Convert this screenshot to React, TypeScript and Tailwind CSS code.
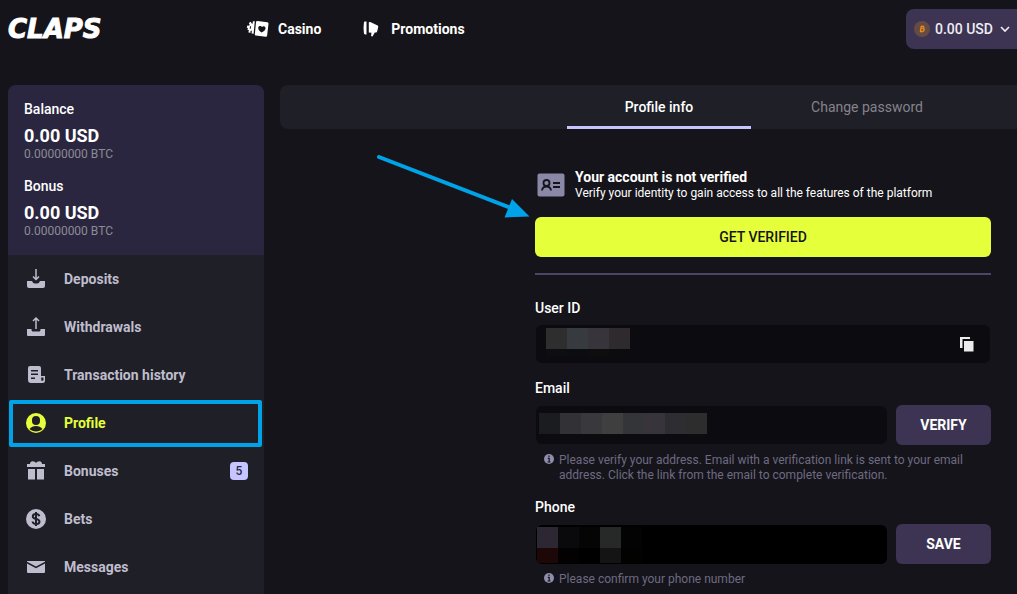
import type { ReactNode } from 'react';

type MenuItem = {
  label: string;
  icon: ReactNode;
  active?: boolean;
  badge?: number;
};

const menuItems: MenuItem[] = [
  { label: 'Deposits', icon: <DepositIcon /> },
  { label: 'Withdrawals', icon: <WithdrawIcon /> },
  { label: 'Transaction history', icon: <HistoryIcon /> },
  { label: 'Profile', icon: <ProfileIcon />, active: true },
  { label: 'Bonuses', icon: <GiftIcon />, badge: 5 },
  { label: 'Bets', icon: <BetsIcon /> },
  { label: 'Messages', icon: <MailIcon /> },
];

const userIdBlocks = [
  ['#2e2e2f', '#373a3e', '#37353b', '#2e2a2d'],
  ['#0c0e12', '#0b0d10', '#0e0e0f', '#0c0b0e'],
];
const emailBlocks = [
  ['#1a1c20', '#323136', '#39383c', '#3f3f40', '#333538', '#37353b', '#2e2d32', '#2d2d2e'],
];
const phoneBlocks = [
  ['#2d2733', '#0a0a0c', '#050505', '#272928', '#030303'],
  ['#1e0707', '#030101', '#000000', '#141414', '#020200'],
];

function DepositIcon() {
  return (
    <svg viewBox="0 0 24 24" className="size-6" fill="currentColor">
      <path d="M3 14h4.5c.5 0 .8.3 1 .8.4 1.1 1.200 1.700 2.300 1.700h2.400c1.100 0 1.900-.6 2.300-1.700.2-.5.5-.8 1-.8H21v5a2 2 0 0 1-2 2H5a2 2 0 0 1-2-2z" />
      <path d="M12 2v10M9 9.500l3 3 3-3" fill="none" stroke="currentColor" strokeWidth="1.500" />
    </svg>
  );
}

function WithdrawIcon() {
  return (
    <svg viewBox="0 0 24 24" className="size-6" fill="currentColor">
      <path d="M3 14h4.500v1c0 .9.600 1.500 1.500 1.500h6c.9 0 1.500-.6 1.500-1.500v-1H21v6a1 1 0 0 1-1 1H4a1 1 0 0 1-1-1z" />
      <path d="M12 14V3.500M9 6l3-3 3 3" fill="none" stroke="currentColor" strokeWidth="1.500" />
    </svg>
  );
}

function HistoryIcon() {
  return (
    <svg viewBox="0 0 24 24" className="size-6">
      <path
        fill="currentColor"
        fillRule="evenodd"
        d="M6 3h9a2 2 0 0 1 2 2v8h4v4.500a2.500 2.500 0 0 1-2.500 2.500H7A3 3 0 0 1 4 17V5a2 2 0 0 1 2-2zM17.200 14.500V17a1.200 1.200 0 0 0 2.300 0v-2.500zM7 7v1.500h7V7zM7 10.500V12h7v-1.500zM7 14.500V16h4v-1.500z"
      />
    </svg>
  );
}

function ProfileIcon() {
  return (
    <svg viewBox="0 0 24 24" className="size-6">
      <path
        fill="currentColor"
        fillRule="evenodd"
        d="M12 2a10 10 0 1 0 0 20 10 10 0 0 0 0-20zM12 5a4 4 0 0 1 4 4v1a4 4 0 0 1-8 0V9a4 4 0 0 1 4-4zM5.500 18c1.600-2 3.800-3 6.500-3s4.900 1 6.500 3c-1.600 1.600-3.800 2.500-6.500 2.500s-4.900-.9-6.500-2.500z"
      />
    </svg>
  );
}

function GiftIcon() {
  return (
    <svg viewBox="0 0 24 24" className="size-6" fill="currentColor">
      <path d="M3 8V5h3c0-1.600 1-2.800 2.700-2.800 1.400 0 2.500.8 3.300 1.800.8-1 1.900-1.800 3.300-1.800C17 2.200 18 3.400 18 5h3v3zM4 10h7v10.500H4zM13 10h7v10.500h-7z" />
    </svg>
  );
}

function BetsIcon() {
  return (
    <svg viewBox="0 0 24 24" className="size-6">
      <circle cx="12" cy="12" r="10" fill="currentColor" />
      <path
        d="M15.300 9.200c-.3-1.500-1.500-2.200-3.300-2.200-1.900 0-3.200.9-3.200 2.400 0 3.400 6.700 1.600 6.700 5.100 0 1.600-1.400 2.500-3.400 2.500-2 0-3.300-.9-3.500-2.500M12 5v14"
        fill="none"
        stroke="#1f1f27"
        strokeWidth="2"
      />
    </svg>
  );
}

function MailIcon() {
  return (
    <svg viewBox="0 0 24 24" className="size-6" fill="currentColor">
      <path d="M3 6h18v.8l-9 4.700-9-4.700zM3 8.500l9 4.800 9-4.800V17a1 1 0 0 1-1 1H4a1 1 0 0 1-1-1z" />
    </svg>
  );
}

function CasinoIcon() {
  return (
    <svg viewBox="0 0 24 18" className="h-[18px] w-6">
      <path
        fill="#fff"
        fillRule="evenodd"
        d="M11.500 1l9.900 1.200a1.300 1.300 0 0 1 1.100 1.500l-1.400 12a1.300 1.300 0 0 1-1.500 1.100L9.800 15.600a1.200 1.200 0 0 1-1-1.300L10 2.200A1.300 1.300 0 0 1 11.500 1zM16 7c-.7-1.700-3.800-1.500-3.800.9 0 1.900 1.600 3.200 3.200 4.700 1.900-1.100 3.900-2.300 4.100-4.200.300-2.300-2.400-2.900-3.500-1.400z"
      />
      <path
        fill="#fff"
        d="M8.800 1.200L7.600 13.800l-2-.4.300-3-1.300.6-.3 2-2-.8.700-1.900L1.400 9.700l.6-1.400-1.300-.8.700-2.100 1.700.4.600-1L2.800 3l2-1.200.9 1.800.9.100.3-2.500z"
      />
      <path d="M4.500 6.200l-.3 2.600" stroke="#15141a" strokeWidth="1" />
    </svg>
  );
}

function PromotionsIcon() {
  return (
    <svg viewBox="0 0 18 18" className="size-[18px]" fill="#fff">
      <path d="M4 1.500h1.500v13H4.300c-.8 0-1.300-.5-1.400-1.200-.5-3.500-.5-7 0-10.500.1-.8.500-1.300 1.100-1.300z" />
      <path d="M7.800 2.300l1.500-.2 6.800 3.200c.9.400 1.300 1.100 1.100 1.900l-1 4.100c-.2.800-.8 1.200-1.500 1.200h-.9l-2 3.400c-.6.900-1.900.5-1.700-.6l.4-2.600-2.700-.2z" />
    </svg>
  );
}

function Mosaic({ rows, className }: { rows: string[][]; className: string }) {
  return (
    <div aria-hidden="true" className={`pointer-events-none absolute overflow-hidden ${className}`}>
      {rows.map((row, r) => (
        <div key={r} className="flex">
          {row.map((color, i) => (
            <span key={i} className="h-[21px] w-[21px]" style={{ backgroundColor: color }} />
          ))}
        </div>
      ))}
    </div>
  );
}

function Hint({ children }: { children: ReactNode }) {
  return (
    <p className="mt-2 flex gap-1 pl-2 text-xs leading-[15px] text-[#6d6a82]">
      <svg viewBox="0 0 12 12" className="size-3 shrink-0">
        <circle cx="6" cy="6" r="5" fill="#8f8dab" />
        <path d="M6 2.500v1.400M4.800 5.400H6.200V9M4.500 9h3" fill="none" stroke="#15141a" strokeWidth="1.200" />
      </svg>
      <span>{children}</span>
    </p>
  );
}

function BalanceRow({ label }: { label: string }) {
  return (
    <div>
      <div className="text-sm leading-4 font-medium">{label}</div>
      <div className="mt-2 text-lg leading-[22px] font-bold">0.00 USD</div>
      <div className="text-xs leading-[14px] text-[#8d8b93]">0.00000000 BTC</div>
    </div>
  );
}

function Header() {
  return (
    <header className="flex h-[85px] items-start pt-[9px]">
      <div className="flex h-10 w-[238px] items-center pl-2">
        <a
          href="#"
          className="font-['DejaVu_Sans'] text-[26px] leading-9 font-bold italic [-webkit-text-stroke:1px_#fff]"
        >
          CLAPS
        </a>
      </div>
      <nav className="flex h-10 items-center gap-10 pl-2 text-sm font-bold">
        <a href="#" className="flex items-center gap-2">
          <CasinoIcon />
          Casino
        </a>
        <a href="#" className="flex items-center gap-3">
          <PromotionsIcon />
          Promotions
        </a>
      </nav>
      <button className="ml-auto flex h-10 items-center gap-1 rounded-l-lg bg-[#3c3452] pr-1.5 pl-2 text-sm font-medium text-[#eeedf2]">
        <svg viewBox="0 0 16 16" className="mr-px size-4">
          <circle cx="8" cy="8" r="8" fill="#664b45" />
          <path
            d="M6.700 5.600h2.200c1.500 0 1.400 2.100 0 2.200H6.500h2.600c1.700 0 1.300 2.500-.4 2.500H5.800M7.200 5.600l-.9 4.700M8 4.600l-.2 1M9.200 4.600l-.2 1M6.900 10.300l-.2 1M8.100 10.300l-.2 1"
            fill="none"
            stroke="#f7931a"
            strokeWidth="1.100"
          />
        </svg>
        0.00 USD
        <svg viewBox="0 0 12 12" className="ml-0.5 size-3" fill="none" stroke="currentColor" strokeWidth="1.600">
          <path d="M2 4l4 4 4-4" />
        </svg>
      </button>
    </header>
  );
}

function Sidebar() {
  return (
    <aside className="w-64 shrink-0 overflow-hidden rounded-t-lg bg-[#1f1f27]">
      <div className="flex min-h-[170px] flex-col gap-[17px] bg-[#2b2640] p-4">
        <BalanceRow label="Balance" />
        <BalanceRow label="Bonus" />
      </div>
      <nav>
        {menuItems.map((item) => (
          <a
            key={item.label}
            href="#"
            className={`relative flex h-12 items-center gap-4 px-4 text-sm font-bold ${
              item.active ? 'text-[#e5ff3a]' : 'text-[#bfbdcd]'
            }`}
          >
            {item.icon}
            {item.label}
            {item.badge && (
              <span className="ml-auto flex size-[18px] items-center justify-center rounded bg-[#c6c5ff] text-xs font-medium text-[#2b2640]">
                {item.badge}
              </span>
            )}
            {item.active && (
              <span className="absolute top-px right-0.5 bottom-0 left-px rounded-xs border-4 border-[#00a2e8]" />
            )}
          </a>
        ))}
      </nav>
    </aside>
  );
}

function ProfileForm() {
  return (
    <form className="mt-10 mr-[26px] ml-auto w-[456px]">
      <div className="flex items-center gap-2.5 pl-0.5">
        <svg viewBox="0 0 28 24" className="h-6 w-7 shrink-0">
          <rect x="0.500" y="0.500" width="27" height="23" rx="2" fill="#8a88a6" />
          <g fill="none" stroke="#15141a" strokeWidth="1.800">
            <circle cx="9.500" cy="10" r="3" />
            <path d="M5 17.500c.3-2.500 1.800-4 4.500-4s4.200 1.500 4.500 4M16 10h7M16 14h7" />
          </g>
        </svg>
        <div>
          <h1 className="text-sm leading-4 font-bold">Your account is not verified</h1>
          <p className="text-xs leading-4">
            Verify your identity to gain access to all the features of the platform
          </p>
        </div>
      </div>

      <div className="relative mt-4">
        <button type="button" className="h-10 w-full rounded-md bg-[#e5ff3a] text-sm font-medium text-[#15141a]">
          GET VERIFIED
        </button>
        <svg viewBox="0 0 160 70" className="absolute -top-16 right-full h-[70px] w-40" fill="#00a2e8">
          <path d="M4 4L136 55" stroke="#00a2e8" strokeWidth="4" strokeLinecap="round" />
          <path d="M154.500 63.500L129.500 64.500 137 46z" />
        </svg>
      </div>

      <hr className="mt-4 h-0.5 border-0 bg-[#4b4568]" />

      <div className="mt-6 flex flex-col gap-[15px]">
        <div>
          <label htmlFor="user-id" className="block text-sm leading-[18px] font-medium">
            User ID
          </label>
          <div className="relative mt-[7px] flex h-10 p-px">
            <input id="user-id" readOnly className="w-full rounded-md bg-[#0c0b10] px-3 text-sm" />
            <Mosaic rows={userIdBlocks} className="top-1 left-[11px] h-7" />
            <button type="button" aria-label="Copy" className="absolute top-3 right-4">
              <svg viewBox="0 0 16 16" className="size-4" fill="#ececec">
                <path d="M1 1h10v2H3.500v9H1zM5 5h9.500v10.500H5z" />
              </svg>
            </button>
          </div>
        </div>

        <div>
          <label htmlFor="email" className="block text-sm leading-[18px] font-medium">
            Email
          </label>
          <div className="mt-2 flex h-10 gap-2">
            <div className="relative flex flex-1 p-px">
              <input id="email" type="email" className="w-full rounded-md bg-[#0c0b10] px-3 text-sm" />
              <Mosaic rows={emailBlocks} className="top-2 left-1" />
            </div>
            <button type="button" className="w-[95px] rounded-md bg-[#3c3452] text-sm font-bold">
              VERIFY
            </button>
          </div>
          <Hint>
            Please verify your address. Email with a verification link is sent to your email
            <br />
            address. Click the link from the email to complete verification.
          </Hint>
        </div>

        <div>
          <label htmlFor="phone" className="block text-sm leading-[18px] font-medium">
            Phone
          </label>
          <div className="mt-2 flex h-10 gap-2">
            <div className="relative flex flex-1 px-px pt-px">
              <input id="phone" type="tel" className="w-full rounded-md bg-black px-3 text-sm" />
              <Mosaic rows={phoneBlocks} className="top-[3px] left-0.5 h-9" />
            </div>
            <button type="button" className="w-[95px] rounded-md bg-[#3c3452] text-sm font-bold">
              SAVE
            </button>
          </div>
          <Hint>Please confirm your phone number</Hint>
        </div>
      </div>
    </form>
  );
}

export default function App() {
  return (
    <div className="flex min-h-screen flex-col bg-[#15141a] font-[Roboto,sans-serif] text-white">
      <Header />
      <div className="flex flex-1 gap-4 pl-2">
        <Sidebar />
        <main className="min-w-0 flex-1">
          <div className="flex h-11 justify-end gap-6 rounded-l-lg bg-[#1f1f27] pr-[58px] text-sm">
            <button className="w-[184px] border-y-[3px] border-t-transparent border-b-[#c6c5ff] font-medium">
              Profile info
            </button>
            <button className="w-[184px] border-y-[3px] border-transparent text-[#85838c]">Change password</button>
          </div>
          <ProfileForm />
        </main>
      </div>
    </div>
  );
}
